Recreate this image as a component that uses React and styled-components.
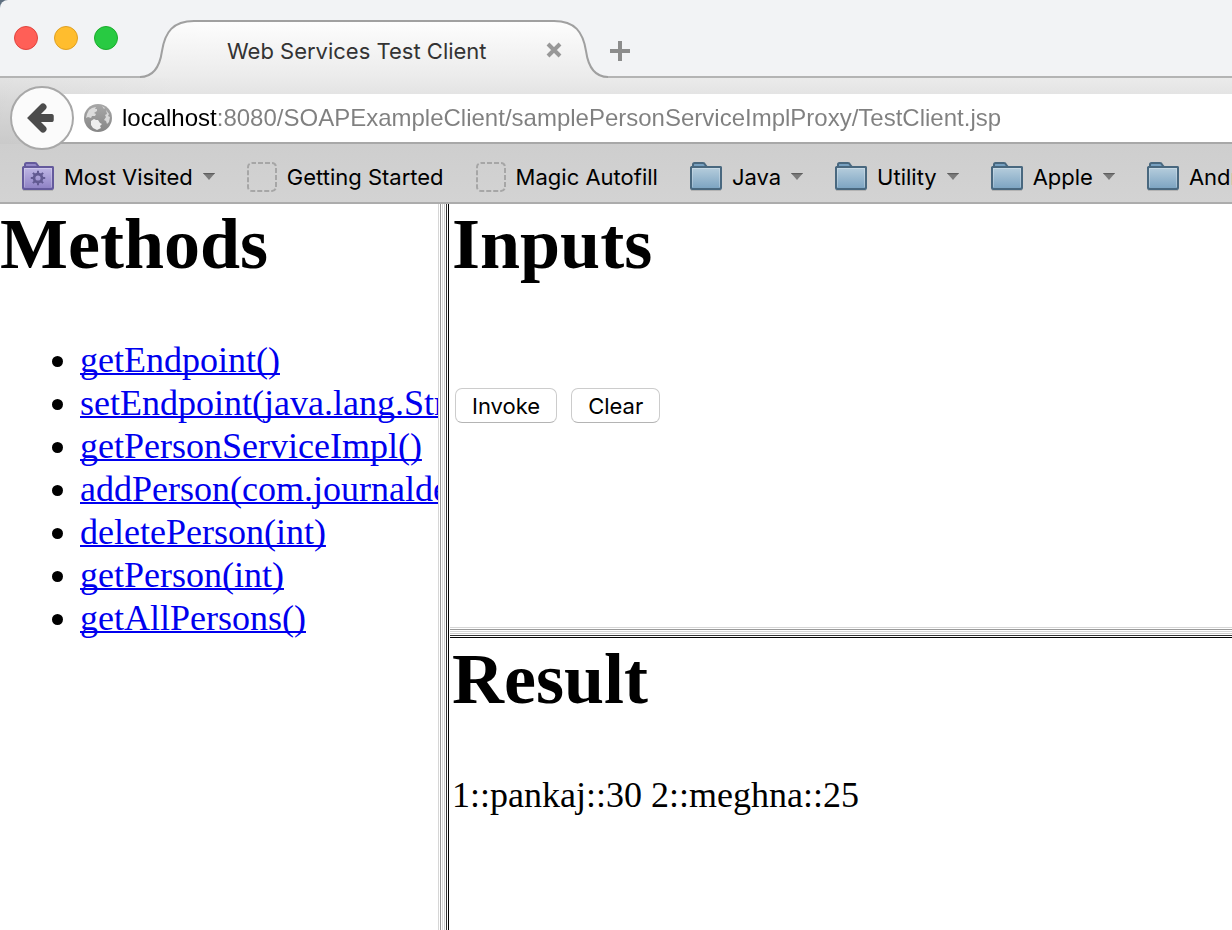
import styled, { createGlobalStyle } from "styled-components";

const bookmarks = [
  { label: "Most Visited", icon: "smart", menu: true },
  { label: "Getting Started", icon: "blank" },
  { label: "Magic Autofill", icon: "blank" },
  { label: "Java", icon: "folder", menu: true },
  { label: "Utility", icon: "folder", menu: true },
  { label: "Apple", icon: "folder", menu: true },
  { label: "Android", icon: "folder", menu: true },
];

const methods = [
  "getEndpoint()",
  "setEndpoint(java.lang.String)",
  "getPersonServiceImpl()",
  "addPerson(com.journaldev.jaxws.beans.Person)",
  "deletePerson(int)",
  "getPerson(int)",
  "getAllPersons()",
];

const address =
  "localhost:8080/SOAPExampleClient/samplePersonServiceImplProxy/TestClient.jsp";

const TabEdge = ({ id, flip }) => (
  <svg width="56" height="78" viewBox="0 0 56 78" aria-hidden="true">
    <defs>
      <linearGradient id={id} x1="0" y1="0" x2="0" y2="1">
        <stop offset="0" stopColor="#fdfdfd" />
        <stop offset="1" stopColor="#ebebeb" />
      </linearGradient>
    </defs>
    <g transform={flip ? "translate(56 0) scale(-1 1)" : undefined}>
      <path
        d="M0 77C14 77 20 65 22 51C25 32 33 21 54 21H56V78H0Z"
        fill={`url(#${id})`}
      />
      <path
        d="M0 77C14 77 20 65 22 51C25 32 33 21 54 21H56"
        fill="none"
        stroke="#a0a0a0"
        strokeWidth="2"
      />
    </g>
  </svg>
);

const BackArrow = () => (
  <svg width="28" height="32" viewBox="0 0 28 32" aria-hidden="true">
    <g fill="none" stroke="#4c4c4c">
      <path d="M16 5L5 16L16 27" strokeWidth="7" strokeLinecap="round" />
      <path d="M5 16H25" strokeWidth="8" />
      <path d="M24 13.500V18.500" strokeWidth="5" strokeLinejoin="round" />
      <path d="M25 13.500V18.500" strokeWidth="3" strokeLinecap="round" />
    </g>
  </svg>
);

const Globe = () => (
  <svg width="28" height="28" viewBox="0 0 28 28" aria-hidden="true">
    <defs>
      <linearGradient id="globe" x1="0" y1="0" x2="0" y2="1">
        <stop offset="0" stopColor="#a8a8a8" />
        <stop offset="1" stopColor="#868686" />
      </linearGradient>
    </defs>
    <circle cx="14" cy="14" r="14" fill="url(#globe)" />
    <path
      d="M3 10L5 6L8 4L12 3L11 5L13 5L13 7L10 9L12 10L11 12L8 12L7 14L4 13L2 14Z"
      fill="#dcdcdc"
    />
    <path
      d="M18 2L21 4L20 5ZM22 6L25 10L24 12L26 13L25 18L23 20L22 17L20 16L22 13L21 11L23 10Z"
      fill="#d8d8d8"
    />
    <path
      d="M7 17L10 15L12 16L14 16L16 19L18 20L16 22L17 24L13 26L9 24L7 21Z"
      fill="#efefef"
    />
  </svg>
);

const teeth = [0, 45, 90, 135, 180, 225, 270, 315];

const Folder = ({ id, smart }) => {
  const line = smart ? "#645a9c" : "#49687f";
  return (
    <svg width="32" height="30" viewBox="0 0 32 30" aria-hidden="true">
      <defs>
        <linearGradient id={id} x1="0" y1="0" x2="0" y2="1">
          <stop offset="0" stopColor={smart ? "#c0b8e6" : "#b7cedd"} />
          <stop offset="1" stopColor={smart ? "#8d80c4" : "#7ba3c1"} />
        </linearGradient>
      </defs>
      <path d="M1 28.500H31" stroke="#b4b4b4" strokeWidth="1" />
      <path
        d="M1 9V6L3 4V2.500Q3 1 4.500 1H13Q14.500 1 15 2.500L17 5H30Q31 5 31 6V9Z"
        fill={smart ? "#9489c8" : "#77a0c0"}
        stroke={line}
        strokeWidth="2"
      />
      <rect
        x="1"
        y="5"
        width="30"
        height="22"
        rx="1"
        fill={`url(#${id})`}
        stroke={line}
        strokeWidth="2"
      />
      <path
        d="M2.500 25V6.500H29.500V25"
        fill="none"
        stroke="#ffffff"
        strokeOpacity="0.25"
      />
      {smart && (
        <g stroke="#625a92" fill="none">
          <circle cx="16" cy="16" r="4" strokeWidth="2.800" />
          {teeth.map((a) => (
            <path
              key={a}
              d="M16 11.500V8.800"
              strokeWidth="2"
              transform={`rotate(${a} 16 16)`}
            />
          ))}
        </g>
      )}
    </svg>
  );
};

const BlankIcon = () => (
  <svg width="30" height="30" viewBox="0 0 30 30" aria-hidden="true">
    <rect
      x="1"
      y="1"
      width="28"
      height="28"
      rx="4"
      fill="none"
      stroke="#a6a6a6"
      strokeWidth="2"
      strokeDasharray="5 2"
      strokeDashoffset="1"
    />
  </svg>
);

const Caret = () => (
  <svg width="12" height="8" viewBox="0 0 12 8" aria-hidden="true">
    <path d="M0 0H12L6 7Z" fill="#7b7b7b" />
    <path d="M0 0H12L11 1.200H1Z" fill="#5e5e5e" />
  </svg>
);

const App = () => {
  return (
    <Page>
      <GlobalStyle />
      <Chrome>
        <TitleBar>
          <Lights>
            <Light $fill="#ff5f57" $edge="#e0443e" aria-label="Close window" />
            <Light $fill="#ffbd2e" $edge="#dfa023" aria-label="Minimize" />
            <Light $fill="#28ca42" $edge="#1bac2c" aria-label="Zoom window" />
          </Lights>
          <Tab>
            <TabEdge id="tabLeft" />
            <TabBody>
              <TabTitle>Web Services Test Client</TabTitle>
              <CloseTab aria-label="Close tab">
                <svg width="16" height="16" viewBox="0 0 16 16">
                  <path
                    d="M2 2L14 14M14 2L2 14"
                    stroke="#989898"
                    strokeWidth="4"
                  />
                </svg>
              </CloseTab>
            </TabBody>
            <TabEdge id="tabRight" flip />
          </Tab>
          <Strip>
            <IconButton aria-label="New tab">
              <svg width="20" height="20" viewBox="0 0 20 20">
                <path
                  d="M10 0V20M0 10H20"
                  stroke="#8c8c8c"
                  strokeWidth="4"
                />
              </svg>
            </IconButton>
          </Strip>
        </TitleBar>

        <NavBar>
          <Back aria-label="Back">
            <BackArrow />
          </Back>
          <AddressBox>
            <Globe />
            <Address aria-label="Address" type="text" defaultValue={address} />
          </AddressBox>
        </NavBar>

        <Bookmarks>
          {bookmarks.map((b, i) => (
            <Bookmark key={b.label}>
              {b.icon === "blank" ? (
                <BlankIcon />
              ) : (
                <Folder id={`folder${i}`} smart={b.icon === "smart"} />
              )}
              {b.label}
              {b.menu && <Caret />}
            </Bookmark>
          ))}
        </Bookmarks>
      </Chrome>

      <Frames>
        <Pane>
          <Heading>Methods</Heading>
          <MethodList>
            {methods.map((m) => (
              <li key={m}>
                <a href="#inputs">{m}</a>
              </li>
            ))}
          </MethodList>
        </Pane>
        <Divider $dir="right" />
        <RightFrames>
          <Pane $inset id="inputs">
            <Heading>Inputs</Heading>
            <Actions>
              <PushButton>Invoke</PushButton>
              <PushButton>Clear</PushButton>
            </Actions>
          </Pane>
          <Divider $dir="bottom" />
          <Pane $inset>
            <Heading>Result</Heading>
            <Result>1::pankaj::30 2::meghna::25</Result>
          </Pane>
        </RightFrames>
      </Frames>
    </Page>
  );
};

const GlobalStyle = createGlobalStyle`
  * {
    box-sizing: border-box;
  }
  body {
    margin: 0;
    background: #5f6f80;
  }
  button {
    font-family: Inter, "Liberation Sans", sans-serif;
    padding: 0;
    border: 0;
    background: none;
  }
  svg {
    display: block;
    flex: none;
  }
`;
const Page = styled.div`
  display: flex;
  flex-direction: column;
  min-height: 100vh;
  overflow: hidden;
`;
const Chrome = styled.header`
  border-radius: 8px 0 0 0;
  overflow: hidden;
  background: #f2f3f5;
`;
const TitleBar = styled.div`
  display: flex;
  height: 78px;
`;
const Lights = styled.div`
  display: flex;
  gap: 16px;
  padding: 26px 22px 0 14px;
  border-bottom: 2px solid #b4b4b4;
`;
const Light = styled.button`
  width: 24px;
  height: 24px;
  border: 1px solid ${(props) => props.$edge};
  border-radius: 50%;
  background: ${(props) => props.$fill};
`;
const Tab = styled.div`
  display: flex;
`;
const TabBody = styled.div`
  display: flex;
  align-items: center;
  width: 356px;
  margin-top: 20px;
  border-top: 2px solid #a0a0a0;
  background: linear-gradient(#fdfdfd, #ebebeb);
`;
const TabTitle = styled.span`
  flex: 1;
  padding: 2px 0 0 31px;
  font: 22px/28px Inter, "Liberation Sans", sans-serif;
  color: #333333;
  white-space: nowrap;
`;
const IconButton = styled.button`
  display: flex;
`;
/* the cross reaches over the start of the tab's curved edge */
const CloseTab = styled(IconButton)`
  position: relative;
  margin-right: -10px;
`;
const Strip = styled.div`
  display: flex;
  flex: 1;
  align-items: center;
  padding: 26px 0 0 2px;
  border-bottom: 2px solid #b4b4b4;
`;
const NavBar = styled.div`
  display: flex;
  height: 66px;
  padding-left: 10px;
  background:
    linear-gradient(90deg, rgba(0, 0, 0, 0.04), rgba(0, 0, 0, 0) 180px),
    linear-gradient(#ebebeb, #e0e0e0 24px, #d2d2d2);
`;
const Back = styled.button`
  display: flex;
  align-items: center;
  justify-content: center;
  width: 64px;
  height: 64px;
  margin-top: 8px;
  padding-right: 2px;
  border: 2px solid #a8a8a8;
  border-radius: 50%;
  background: #fbfbfb;
  position: relative;
  z-index: 1;
`;
const AddressBox = styled.div`
  display: flex;
  flex: 1;
  align-items: center;
  gap: 10px;
  margin: 16px 0 0 -20px;
  padding-left: 30px;
  border-bottom: 2px solid #a8a8a8;
  background: #ffffff;
`;
/* the host part is drawn darker than the rest of the path */
const Address = styled.input`
  flex: 1;
  min-width: 0;
  padding: 0;
  border: 0;
  font: 24px/32px "Liberation Sans", Arial, sans-serif;
  color: transparent;
  caret-color: #000000;
  background: linear-gradient(90deg, #000000 95px, #808080 95px);
  background-clip: text;
  outline: none;
`;
const Bookmarks = styled.nav`
  display: flex;
  gap: 32px;
  height: 60px;
  padding: 8px 0 0 22px;
  overflow: hidden;
  border-bottom: 2px solid #acacac;
  background: linear-gradient(#cecece, #d3d3d3);
`;
const Bookmark = styled.button`
  display: flex;
  flex: none;
  align-items: center;
  gap: 10px;
  font-size: 22px;
  line-height: 28px;
  color: #000000;
`;
const Frames = styled.main`
  display: grid;
  flex: 1;
  grid-template-columns: minmax(0, 219fr) 12px minmax(0, 391fr);
  font: 36px/43px "Liberation Serif", "Times New Roman", serif;
  color: #000000;
  background: #ffffff;
`;
const RightFrames = styled.div`
  display: grid;
  grid-template-rows: 141fr 12px 97fr;
`;
const Pane = styled.section`
  overflow: hidden;
  padding-left: ${(props) => (props.$inset ? "2px" : "0")};
`;
const Divider = styled.div`
  background: linear-gradient(
    to ${(props) => props.$dir},
    #d6d6d6 1px, #ffffff 1px 2px,
    #999999 2px 3px, #ffffff 3px 4px,
    #d6d6d6 4px 5px, #ffffff 5px 6px,
    #cccccc 6px 7px, #ffffff 7px 8px,
    #333333 8px 9px, #ffffff 9px 10px,
    #000000 10px 11px, #ffffff 11px
  );
`;
const Heading = styled.h1`
  margin: 0 0 55px;
  font-size: 72px;
  line-height: 80px;
`;
const MethodList = styled.ul`
  margin: 0;
  padding-left: 80px;
  white-space: nowrap;

  a {
    color: #0000ee;
    text-decoration-thickness: 2px;
    text-decoration-skip-ink: none;
  }
`;
const Actions = styled.div`
  display: flex;
  gap: 14px;
  padding: 49px 0 0 3px;
`;
const PushButton = styled.button`
  height: 35px;
  padding: 0 16px;
  border: 1px solid #cccccc;
  border-bottom-color: #b4b4b4;
  border-radius: 7px;
  font-size: 22px;
  line-height: 28px;
  color: #000000;
  background: #ffffff;
`;
const Result = styled.p`
  margin: 0;
`;

export default App;
